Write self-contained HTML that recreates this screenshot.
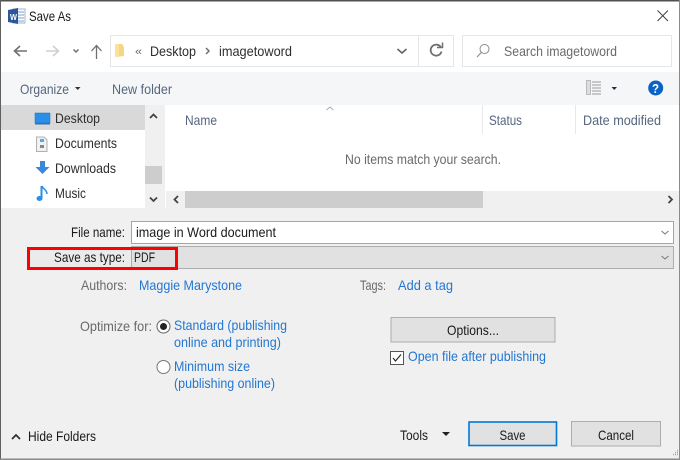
<!DOCTYPE html>
<html>
<head>
<meta charset="utf-8">
<title>Save As</title>
<style>
html,body{margin:0;padding:0;background:#f0f0f0;width:680px;height:460px;overflow:hidden}
svg{display:block;filter:blur(.3px)}
text{font-family:"Liberation Sans",sans-serif;font-size:14px;fill:#2e2e2e}
.g{fill:#6a6a6a}
.b{fill:#2377d2}
.h{fill:#55667f}
.d{fill:#1a1a1a}
</style>
</head>
<body>
<svg width="680" height="460" viewBox="0 0 680 460" xmlns="http://www.w3.org/2000/svg">
<rect width="680" height="460" fill="#f0f0f0"/>
<!-- title + toolbar -->
<rect x="0" y="0" width="680" height="72" fill="#fff"/>
<!-- command bar -->
<rect x="0" y="72" width="680" height="33" fill="#f5f6f7"/>
<!-- Word icon -->
<rect x="13" y="9" width="12" height="14" fill="#fff" stroke="#9db4d4" stroke-width="1"/>
<path d="M17 12h7M17 15h7M17 18h7M17 21h7" stroke="#7f9cc4" stroke-width="1"/>
<path d="M8 10l10-2v16l-10-2z" fill="#2b579a"/>
<text x="10" y="20" style="font-size:8px;font-weight:bold;fill:#fff" textLength="7" lengthAdjust="spacingAndGlyphs">W</text>
<text x="29" y="21" class="d" textLength="42" lengthAdjust="spacingAndGlyphs">Save As</text>
<!-- close -->
<path d="M657.500 10.500l10.500 10.500M668 10.500l-10.500 10.500" stroke="#444" stroke-width="1" fill="none"/>
<!-- nav arrows -->
<path d="M27 51H15M20 46l-5.500 5 5.500 5" stroke="#707070" stroke-width="1.600" fill="none"/>
<path d="M46 51h12M53 46l5.500 5-5.500 5" stroke="#cfcfcf" stroke-width="1.600" fill="none"/>
<path d="M73.500 49.500l2.500 2.500 2.500-2.500" stroke="#707070" stroke-width="1.500" fill="none"/>
<path d="M96.500 59V46M91.500 51l5-5.500 5 5.500" stroke="#707070" stroke-width="1.300" fill="none"/>
<!-- address bar -->
<rect x="110.500" y="35.500" width="343" height="31" fill="#fff" stroke="#e6e6e6"/>
<path d="M418.500 36v30" stroke="#e6e6e6"/>
<path d="M115 44h7l2 3v9l-9 1z" fill="#f6d77f"/>
<path d="M115 44h4v13h-4z" fill="#fbe29c"/>
<text x="135" y="55" class="g" textLength="7" lengthAdjust="spacingAndGlyphs" style="font-size:11px">«</text>
<text x="150" y="56" textLength="46" lengthAdjust="spacingAndGlyphs">Desktop</text>
<path d="M206 48l3 3-3 3" stroke="#707070" stroke-width="1.500" fill="none"/>
<text x="219" y="56" textLength="73" lengthAdjust="spacingAndGlyphs">imagetoword</text>
<path d="M397.500 49l4.500 4 4.500-4" stroke="#666" stroke-width="1.600" fill="none"/>
<path d="M441 47.500a5.500 5.500 0 1 0 .5 4" stroke="#707070" stroke-width="1.800" fill="none"/>
<path d="M437 47.500h5.500v-5" stroke="#707070" stroke-width="1.500" fill="none"/>
<!-- search -->
<rect x="462.500" y="35.500" width="209" height="31" fill="#fff" stroke="#e6e6e6"/>
<circle cx="484.500" cy="49" r="4.500" fill="none" stroke="#8a8a8a"/>
<path d="M481.300 52.500l-4.300 4.500" stroke="#8a8a8a" stroke-width="1.100"/>
<text x="504" y="56" class="g" textLength="113" lengthAdjust="spacingAndGlyphs">Search imagetoword</text>
<!-- command bar content -->
<text x="20" y="94" class="h" textLength="49" lengthAdjust="spacingAndGlyphs">Organize</text>
<path d="M75 87h5.500l-2.750 3z" fill="#333"/>
<text x="112" y="94" class="h" textLength="60" lengthAdjust="spacingAndGlyphs">New folder</text>
<rect x="586.500" y="80.500" width="4" height="14" fill="#ddd" stroke="#bbb"/>
<path d="M592 82h9M592 85h9M592 88h9M592 91h9M592 94h9" stroke="#999" stroke-width="1"/>
<path d="M611.500 87h5.500l-2.750 3z" fill="#1d2c4a"/>
<circle cx="655.700" cy="88" r="7.500" fill="#0a62c4"/>
<text x="652" y="93" style="font-size:13px;font-weight:bold;fill:#fff" textLength="7" lengthAdjust="spacingAndGlyphs">?</text>
<!-- nav pane -->
<rect x="1" y="105" width="161" height="103" fill="#fff"/>
<rect x="1" y="105" width="144" height="25" fill="#d9d9d9"/>
<rect x="145" y="105" width="17" height="103" fill="#f0f0f0"/>
<rect x="145" y="166" width="17" height="18" fill="#cdcdcd"/>
<path d="M150 118l3.500-3.500 3.500 3.500" stroke="#444" stroke-width="1.800" fill="none"/>
<path d="M150 197.500l3.500 3.500 3.500-3.500" stroke="#444" stroke-width="1.800" fill="none"/>
<!-- nav icons -->
<rect x="35" y="113" width="15" height="10" fill="#2a8fe8" stroke="#1f6fc0" stroke-width=".5"/>
<rect x="35" y="123" width="15" height="1.500" fill="#3b6ea5"/>
<path d="M36.500 137h7.500l3 3v11.500h-10.500z" fill="#f2f2f2" stroke="#b0b0b0"/>
<rect x="40" y="139" width="4" height="3" fill="#5aa7e8"/>
<rect x="40" y="145" width="4" height="3" fill="#7a8a9a"/>
<path d="M40 161h5v6h4.500l-7 7-7-7h4.500z" fill="#3a88dc"/>
<path d="M41.500 186v12" stroke="#2a8fe8" stroke-width="2" fill="none"/>
<path d="M42 186c1 3 5 4 5 8" stroke="#2a8fe8" stroke-width="1.500" fill="none"/>
<ellipse cx="39.500" cy="198.500" rx="3" ry="2.500" fill="#2a8fe8"/>
<text x="55" y="123" textLength="45" lengthAdjust="spacingAndGlyphs">Desktop</text>
<text x="55" y="148" textLength="62" lengthAdjust="spacingAndGlyphs">Documents</text>
<text x="55" y="173" textLength="61" lengthAdjust="spacingAndGlyphs">Downloads</text>
<text x="55" y="198" textLength="31" lengthAdjust="spacingAndGlyphs">Music</text>
<!-- file list -->
<rect x="165" y="105" width="515" height="103" fill="#fff"/>
<path d="M482.500 105v29M575.500 105v29" stroke="#e8e8e8"/>
<path d="M326.500 110l3.500-3 3.500 3" stroke="#aaa" fill="none"/>
<text x="185" y="125" class="h" textLength="32" lengthAdjust="spacingAndGlyphs">Name</text>
<text x="489" y="125" class="h" textLength="33" lengthAdjust="spacingAndGlyphs">Status</text>
<text x="583" y="125" class="h" textLength="78" lengthAdjust="spacingAndGlyphs">Date modified</text>
<text x="345" y="164" class="g" textLength="156" lengthAdjust="spacingAndGlyphs">No items match your search.</text>
<!-- h scrollbar -->
<rect x="166" y="191" width="514" height="17" fill="#f0f0f0"/>
<rect x="185" y="191" width="298" height="17" fill="#cdcdcd"/>
<path d="M178 196l-3.500 3.500 3.500 3.500" stroke="#444" stroke-width="1.800" fill="none"/>
<path d="M668.500 196l3.500 3.500-3.500 3.500" stroke="#444" stroke-width="1.800" fill="none"/>
<!-- file name -->
<text x="71" y="237" class="d" textLength="54" lengthAdjust="spacingAndGlyphs">File name:</text>
<rect x="131.500" y="221.500" width="542" height="22" fill="#fff" stroke="#a5a5a5"/>
<text x="136" y="237" class="d" textLength="140" lengthAdjust="spacingAndGlyphs">image in Word document</text>
<path d="M661.500 231l3.500 3 3.500-3" stroke="#777" fill="none"/>
<!-- save as type -->
<rect x="30" y="250" width="102" height="17" fill="#ebebeb"/>
<rect x="131.500" y="246.500" width="542" height="22" fill="#e1e1e1" stroke="#adadad"/>
<text x="54" y="262" class="d" textLength="71" lengthAdjust="spacingAndGlyphs">Save as type:</text>
<text x="134" y="262" class="d" textLength="21" lengthAdjust="spacingAndGlyphs">PDF</text>
<path d="M661.500 256l3.500 3 3.500-3" stroke="#777" fill="none"/>
<rect x="28.500" y="248.500" width="148" height="20" fill="none" stroke="#ff0000" stroke-width="3"/>
<!-- authors / tags -->
<text x="81" y="290" class="g" textLength="46" lengthAdjust="spacingAndGlyphs">Authors:</text>
<text x="139" y="290" class="b" textLength="103" lengthAdjust="spacingAndGlyphs">Maggie Marystone</text>
<text x="360" y="290" class="g" textLength="26" lengthAdjust="spacingAndGlyphs">Tags:</text>
<text x="398" y="290" class="b" textLength="55" lengthAdjust="spacingAndGlyphs">Add a tag</text>
<!-- optimize -->
<text x="80" y="331" class="g" textLength="72" lengthAdjust="spacingAndGlyphs">Optimize for:</text>
<circle cx="163.500" cy="326.500" r="6.500" fill="#fff" stroke="#666"/>
<circle cx="163.500" cy="326.500" r="3.500" fill="#222"/>
<text x="174" y="330" class="b" textLength="113" lengthAdjust="spacingAndGlyphs">Standard (publishing</text>
<text x="174" y="347" class="b" textLength="107" lengthAdjust="spacingAndGlyphs">online and printing)</text>
<circle cx="163.500" cy="367" r="6.500" fill="#fff" stroke="#777"/>
<text x="174" y="371" class="b" textLength="76" lengthAdjust="spacingAndGlyphs">Minimum size</text>
<text x="174" y="388" class="b" textLength="101" lengthAdjust="spacingAndGlyphs">(publishing online)</text>
<!-- options -->
<rect x="391" y="317.500" width="164" height="24.500" fill="#e1e1e1" stroke="#adadad"/>
<text x="447" y="335" class="d" textLength="52" lengthAdjust="spacingAndGlyphs">Options...</text>
<rect x="390.500" y="351.500" width="13" height="13" fill="#fff" stroke="#555"/>
<path d="M393 358l2.500 3 5.500-6.500" stroke="#222" stroke-width="1.100" fill="none"/>
<text x="408" y="361" class="b" textLength="138" lengthAdjust="spacingAndGlyphs">Open file after publishing</text>
<!-- bottom -->
<path d="M12 439l4-4 4 4" stroke="#333" stroke-width="1.800" fill="none"/>
<text x="28" y="441" class="d" textLength="68" lengthAdjust="spacingAndGlyphs">Hide Folders</text>
<text x="400" y="440" class="d" textLength="28" lengthAdjust="spacingAndGlyphs">Tools</text>
<path d="M442 432h8l-4 4z" fill="#222"/>
<rect x="469" y="422" width="87.500" height="23.500" fill="#e1e1e1" stroke="#0078d7" stroke-width="1.600"/>
<text x="499.500" y="440" class="d" textLength="26" lengthAdjust="spacingAndGlyphs">Save</text>
<rect x="571.500" y="421.500" width="89" height="24.500" fill="#e1e1e1" stroke="#adadad"/>
<text x="598" y="440" class="d" textLength="36" lengthAdjust="spacingAndGlyphs">Cancel</text>
<path d="M677 450.500h1M675 452.500h1M677 452.500h1M673 454.500h1M675 454.500h1M677 454.500h1" stroke="#a8a8a8" stroke-width="1.500" fill="none"/>
<!-- window borders -->
<rect x="0" y="0" width="680" height="1.500" fill="#505050"/>
<rect x="0" y="0" width="1" height="460" fill="#606060"/>
<rect x="679" y="0" width="1" height="460" fill="#8a8a8a"/>
<rect x="0" y="458.500" width="680" height="1.500" fill="#8a8a8a"/>
</svg>
</body>
</html>
